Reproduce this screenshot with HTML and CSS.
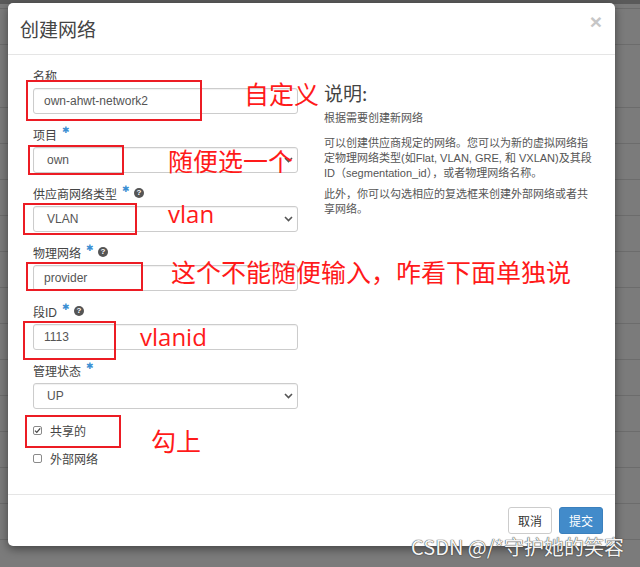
FILE: index.html
```html
<!DOCTYPE html>
<html lang="zh-CN">
<head>
<meta charset="utf-8">
<title>创建网络</title>
<link rel="stylesheet" href="styles.css">
</head>
<body>
<div class="modal">
  <div class="modal-header">
    <h3 class="title">创建网络</h3>
    <span class="close">×</span>
  </div>
  <div class="modal-body">
    <div class="form-col">
      <div class="group">
        <div class="lbl">名称</div>
        <div class="field">own-ahwt-network2</div>
      </div>
      <div class="group">
        <div class="lbl">项目<span class="req">✱</span></div>
        <div class="field select"><span>own</span><svg class="chev" width="9" height="6" viewBox="0 0 9 6"><polyline points="1,1 4.5,4.5 8,1" fill="none" stroke="#555" stroke-width="1.6"/></svg></div>
      </div>
      <div class="group">
        <div class="lbl">供应商网络类型<span class="req">✱</span><span class="qm">?</span></div>
        <div class="field select"><span>VLAN</span><svg class="chev" width="9" height="6" viewBox="0 0 9 6"><polyline points="1,1 4.5,4.5 8,1" fill="none" stroke="#555" stroke-width="1.6"/></svg></div>
      </div>
      <div class="group">
        <div class="lbl">物理网络<span class="req">✱</span><span class="qm">?</span></div>
        <div class="field">provider</div>
      </div>
      <div class="group">
        <div class="lbl">段ID<span class="req">✱</span><span class="qm">?</span></div>
        <div class="field">1113</div>
      </div>
      <div class="group">
        <div class="lbl">管理状态<span class="req">✱</span></div>
        <div class="field select"><span>UP</span><svg class="chev" width="9" height="6" viewBox="0 0 9 6"><polyline points="1,1 4.5,4.5 8,1" fill="none" stroke="#555" stroke-width="1.6"/></svg></div>
      </div>
      <div class="check-row"><span class="cb"><svg width="7" height="7" viewBox="0 0 7 7"><polyline points="1,3.6 2.8,5.4 6.2,1.4" fill="none" stroke="#444" stroke-width="1.3"/></svg></span>共享的</div>
      <div class="check-row"><span class="cb"></span>外部网络</div>
    </div>
    <div class="help-col">
      <h4 class="help-title">说明:</h4>
      <p class="p-first">根据需要创建新网络</p>
      <p class="p-mid">可以创建供应商规定的网络。您可以为新的虚拟网络指<br>定物理网络类型(如Flat, VLAN, GRE, 和 VXLAN)及其段<br>ID（segmentation_id），或者物理网络名称。</p>
      <p class="p-last">此外，你可以勾选相应的复选框来创建外部网络或者共<br>享网络。</p>
    </div>
  </div>
  <div class="modal-footer">
    <button class="btn">取消</button>
    <button class="btn primary">提交</button>
  </div>

  <div class="box b1"></div>
  <div class="box b2"></div>
  <div class="box b3"></div>
  <div class="box b4"></div>
  <div class="box b5"></div>
  <div class="box b6"></div>

  <div class="note n1">自定义</div>
  <div class="note n2">随便选一个</div>
  <div class="note latin n3">vlan</div>
  <div class="note n4">这个不能随便输入，咋看下面单独说</div>
  <div class="note latin n5">vlanid</div>
  <div class="note n6">勾上</div>
</div>
<div class="watermark">CSDN @/*守护她的笑容</div>
</body>
</html>
```
FILE: styles.css
```css
* { box-sizing: border-box; }
html, body { margin: 0; }
body {
  width: 640px;
  height: 567px;
  overflow: hidden;
  position: relative;
  padding: 3px 0 0 8px;
  font-family: "Liberation Sans", "Noto Sans CJK SC", sans-serif;
  background-color: #7b7b7b;
  background-image:
    linear-gradient(#5a5a5a 0 4px, transparent 4px),
    repeating-linear-gradient(to bottom, transparent 0 35px, #6c6c6c 35px 36px);
  background-position: 0 0, 0 72px;
}

.modal {
  position: relative;
  width: 607px;
  height: 543px;
  background: #fff;
  border-radius: 5px;
  box-shadow: 0 3px 10px rgba(0, 0, 0, 0.45);
  display: flex;
  flex-direction: column;
}

.modal-header {
  height: 52px;
  flex: none;
  border-bottom: 1px solid #e5e5e5;
  display: flex;
  justify-content: space-between;
  align-items: flex-start;
  padding: 0 13px 0 12px;
}
.title {
  margin: 0;
  font-size: 19px;
  font-weight: normal;
  line-height: 51px;
  color: #444;
  font-family: "Noto Sans CJK SC", sans-serif;
}
.close {
  margin-top: 7px;
  font-size: 21px;
  line-height: 24px;
  font-weight: bold;
  color: #c6c6c6;
}

.modal-body {
  flex: 1;
  display: flex;
  gap: 26px;
  padding: 12px 17px 0 25px;
}
.form-col { width: 265px; flex: none; }
.group { margin-bottom: 12px; }
.lbl {
  display: flex;
  align-items: center;
  height: 16px;
  margin-bottom: 5px;
  font-size: 12px;
  color: #444;
}
.req {
  color: #3b8fd3;
  font-size: 9px;
  margin-left: 5px;
  align-self: flex-start;
  line-height: 9px;
}
.qm {
  width: 10px;
  height: 10px;
  border-radius: 50%;
  background: #555;
  color: #fff;
  font-size: 8px;
  font-weight: bold;
  line-height: 10px;
  text-align: center;
  margin-left: 4px;
}
.field {
  height: 26px;
  border: 1px solid #ccc;
  border-radius: 3px;
  display: flex;
  align-items: center;
  padding-left: 10px;
  font-size: 12px;
  color: #555;
  box-shadow: inset 0 1px 1px rgba(0, 0, 0, 0.06);
}
.select {
  padding-left: 13px;
  padding-right: 4px;
  justify-content: space-between;
}
.chev { flex: none; }

.check-row {
  display: flex;
  align-items: center;
  height: 18px;
  margin-bottom: 10px;
  font-size: 12px;
  color: #444;
}
.cb {
  width: 9px;
  height: 9px;
  border: 1px solid #8a8a8a;
  border-radius: 2px;
  margin-right: 8px;
  display: flex;
  align-items: center;
  justify-content: center;
}

.help-col {
  flex: 1;
  font-size: 11px;
  line-height: 15px;
  color: #555;
  white-space: nowrap;
}
.help-title {
  margin: 14px 0 0;
  font-size: 19px;
  line-height: 24px;
  font-weight: normal;
  color: #444;
  font-family: "Noto Sans CJK SC", sans-serif;
}
.help-col p { margin: 0; }
.p-first { margin-top: 6px !important; }
.p-mid { margin-top: 10px !important; }
.p-last { margin-top: 6px !important; }

.modal-footer {
  flex: none;
  border-top: 1px solid #e5e5e5;
  padding: 12px 12px;
  display: flex;
  justify-content: flex-end;
  gap: 7px;
}
.btn {
  height: 27px;
  padding: 0 9px;
  font-size: 12px;
  font-family: "Liberation Sans", "Noto Sans CJK SC", sans-serif;
  color: #333;
  background: #fff;
  border: 1px solid #ccc;
  border-radius: 3px;
}
.btn.primary {
  background: #428bca;
  border-color: #3b80bd;
  color: #fff;
}

/* red annotations drawn over the dialog */
.box {
  position: absolute;
  border: 2px solid #ec1c24;
}
.b1 { left: 18px; top: 77px; width: 176px; height: 41px; }
.b2 { left: 20px; top: 142px; width: 96px; height: 30px; }
.b3 { left: 15px; top: 200px; width: 114px; height: 32px; }
.b4 { left: 18px; top: 259px; width: 117px; height: 29px; }
.b5 { left: 15px; top: 318px; width: 93px; height: 39px; }
.b6 { left: 17px; top: 412px; width: 96px; height: 33px; }

.note {
  position: absolute;
  color: #ff1a1a;
  font-family: "Noto Sans CJK SC", sans-serif;
  font-size: 25px;
  line-height: 25px;
  white-space: nowrap;
}
.note.latin { font-family: "Open Sans", "Noto Sans CJK SC", sans-serif; font-size: 24px; }
.n1 { left: 236px; top: 78px; }
.n2 { left: 160px; top: 145px; }
.n3 { left: 160px; top: 198px; }
.n4 { left: 163px; top: 256px; }
.n5 { left: 132px; top: 321px; font-size: 26px; }
.n6 { left: 143px; top: 425px; }

.watermark {
  position: absolute;
  left: 411px;
  top: 536px;
  font-family: "Noto Sans CJK SC", sans-serif;
  font-size: 20px;
  line-height: 22px;
  color: #f4f4f4;
  text-shadow: 0 0 1px #333, 0 0 1px #333;
  white-space: nowrap;
}
```
